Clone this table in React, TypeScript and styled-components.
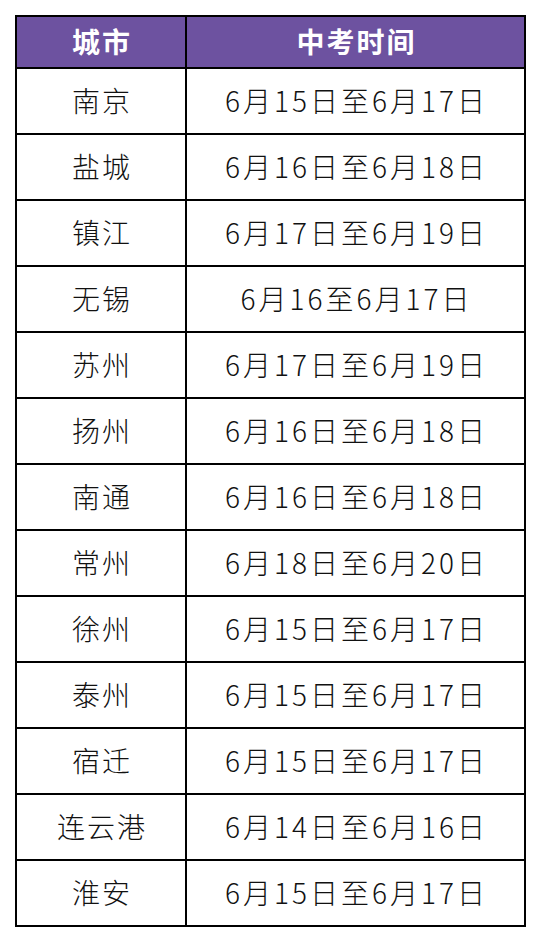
import styled, { createGlobalStyle } from "styled-components";

const GlobalStyle = createGlobalStyle`
  html, body {
    margin: 0;
    padding: 0;
    background: #ffffff;
  }
`;

const Page = styled.div`
  padding: 15px 16px 15px 15px;
  font-family: "Noto Sans CJK SC", "Noto Sans", sans-serif;
`;

const Table = styled.table`
  width: 511px;
  border-collapse: separate;
  border-spacing: 0;
  border-top: 2px solid #000;
  border-left: 2px solid #000;
  table-layout: fixed;
`;

const Cell = styled.td<{ $head?: boolean }>`
  box-sizing: border-box;
  height: ${(p) => (p.$head ? "52px" : "66px")};
  padding: 0 0 2px 2px;
  border-right: 2px solid #000;
  border-bottom: 2px solid #000;
  text-align: center;
  vertical-align: middle;
  font-size: 28px;
  line-height: 1;
  letter-spacing: 2px;
  font-weight: ${(p) => (p.$head ? 700 : 300)};
  color: ${(p) => (p.$head ? "#ffffff" : "#111111")};
  background: ${(p) => (p.$head ? "#6d52a0" : "#ffffff")};
`;

const Dates = styled.span`
  letter-spacing: 3px;
`;

const rows: [string, string][] = [
  ["南京", "6月15日至6月17日"],
  ["盐城", "6月16日至6月18日"],
  ["镇江", "6月17日至6月19日"],
  ["无锡", "6月16至6月17日"],
  ["苏州", "6月17日至6月19日"],
  ["扬州", "6月16日至6月18日"],
  ["南通", "6月16日至6月18日"],
  ["常州", "6月18日至6月20日"],
  ["徐州", "6月15日至6月17日"],
  ["泰州", "6月15日至6月17日"],
  ["宿迁", "6月15日至6月17日"],
  ["连云港", "6月14日至6月16日"],
  ["淮安", "6月15日至6月17日"],
];

const App = () => {
  return (
    <Page>
      <GlobalStyle />
      <Table>
        <colgroup>
          <col style={{ width: 170 }} />
          <col style={{ width: 339 }} />
        </colgroup>
        <thead>
          <tr>
            <Cell as="th" $head>
              城市
            </Cell>
            <Cell as="th" $head>
              中考时间
            </Cell>
          </tr>
        </thead>
        <tbody>
          {rows.map(([city, time]) => (
            <tr key={city}>
              <Cell>{city}</Cell>
              <Cell>
                <Dates>{time}</Dates>
              </Cell>
            </tr>
          ))}
        </tbody>
      </Table>
    </Page>
  );
};

export default App;
